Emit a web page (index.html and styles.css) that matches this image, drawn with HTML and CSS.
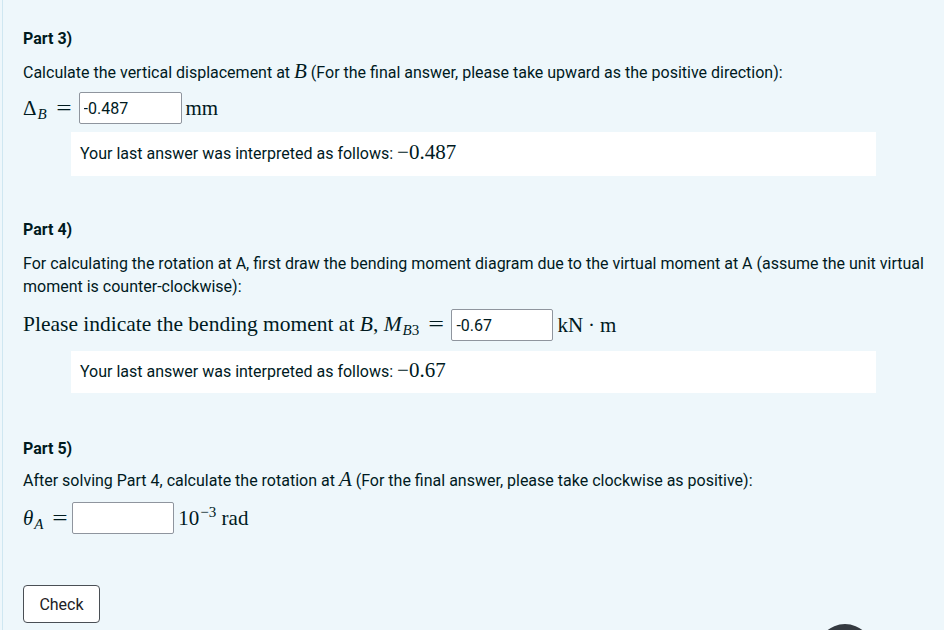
FILE: index.html
```html
<!DOCTYPE html>
<html lang="en">
<head>
<meta charset="utf-8">
<title>Question parts</title>
<link rel="stylesheet" href="styles.css">
</head>
<body>
<div class="formulation">
  <section class="part part-3">
    <p class="part-title">Part 3)</p>
    <p class="text">Calculate the vertical displacement at <span class="mi">B</span> (For the final answer, please take upward as the positive direction):</p>
    <div class="answer-row">
      <span class="math lhs">Δ<span class="sub mi">B</span><span class="eq">=</span></span>
      <input class="answer w103" type="text" value="-0.487">
      <span class="math unit">mm</span>
    </div>
    <div class="validation">Your last answer was interpreted as follows: <span class="math">−0.487</span></div>
  </section>

  <section class="part part-4">
    <p class="part-title">Part 4)</p>
    <p class="text">For calculating the rotation at A, first draw the bending moment diagram due to the virtual moment at A (assume the unit virtual moment is counter-clockwise):</p>
    <div class="answer-row">
      <span class="math lhs wide">Please indicate the bending moment at <span class="mi">B</span>, <span class="mi">M</span><span class="sub"><span class="mi">B</span>3</span><span class="eq">=</span></span>
      <input class="answer w102" type="text" value="-0.67">
      <span class="math unit">kN<span class="cdot">·</span>m</span>
    </div>
    <div class="validation">Your last answer was interpreted as follows: <span class="math">−0.67</span></div>
  </section>

  <section class="part part-5">
    <p class="part-title">Part 5)</p>
    <p class="text">After solving Part 4, calculate the rotation at <span class="mi">A</span> (For the final answer, please take clockwise as positive):</p>
    <div class="answer-row">
      <span class="math lhs"><span class="mi">θ</span><span class="sub mi">A</span><span class="eq eq-tight">=</span></span>
      <input class="answer w102" type="text" value="">
      <span class="math unit">10<span class="sup">−3</span> rad</span>
    </div>
  </section>

  <div class="actions">
    <button class="check-btn" type="button">Check</button>
  </div>
</div>
<div class="footer-fab" aria-hidden="true"></div>
</body>
</html>
```

FILE: styles.css
```css
* { box-sizing: border-box; }

html, body {
  margin: 0;
  padding: 0;
  background: #eef7fb;
}

body {
  width: 944px;
  height: 630px;
  overflow: hidden;
  position: relative;
  font-family: Roboto, "Liberation Sans", sans-serif;
  font-size: 16px;
  color: #001a1e;
}

.formulation {
  margin-left: 2px;
  border-left: 1px solid #cfe7f1;
  padding: 27px 12px 0 20px;
  height: 630px;
}

p { margin: 0; line-height: 23px; }

.part-title { font-weight: 700; }

.text { margin-top: 11px; }

.part-4 { margin-top: 42px; }
.part-5 { margin-top: 44px; }
.part-5 .text { margin-top: 9px; }

.math {
  font-family: "Liberation Serif", "DejaVu Serif", serif;
  font-size: 21px;
  line-height: 1;
}
.math.wide { font-size: 21.5px; }

.mi {
  font-style: italic;
  font-family: "Liberation Serif", "DejaVu Serif", serif;
  font-size: 21px;
}
.wide .mi { font-size: 21.5px; }
.text .mi { line-height: 0; }

.sub {
  font-size: 15px;
  position: relative;
  top: 4px;
  margin-left: 1px;
}
.sub .mi, .wide .sub .mi { font-size: 15px; }
.wide .sub { font-size: 15px; }

.sup {
  font-size: 15px;
  position: relative;
  top: -8px;
  margin-left: 1px;
}

.eq {
  display: inline-block;
  transform: scaleX(1.3);
  margin: 0 9px 0 11px;
}
.eq-tight { margin: 0 7px 0 10px; }

.answer-row {
  display: flex;
  align-items: center;
  height: 32px;
  margin-top: 8px;
}
.part-4 .answer-row { margin-top: 11px; }
.part-5 .answer-row { margin-top: 10px; }

.answer {
  height: 32px;
  border: 1px solid #8f959e;
  border-radius: 2px;
  background: #fff;
  font-family: Roboto, "Liberation Sans", sans-serif;
  font-size: 16px;
  color: #001a1e;
  padding: 0 4px;
  margin: 0;
  outline: none;
}
.w103 { width: 103px; }
.w102 { width: 102px; }

.unit { margin-left: 4px; }
.cdot { margin: 0 5px; }

.validation {
  margin: 8px 56px 0 48px;
  background: #fff;
  padding: 10px 9px;
  line-height: 24px;
  height: 44px;
}
.part-4 .validation { height: 42px; padding-top: 9px; margin-top: 10px; }

.actions { margin-top: 51px; }

.check-btn {
  width: 77px;
  height: 38px;
  background: #fff;
  border: 1px solid #4a4f55;
  border-radius: 4px;
  font-family: Roboto, "Liberation Sans", sans-serif;
  font-size: 16px;
  color: #1d2125;
  padding: 0;
}

.footer-fab {
  position: absolute;
  left: 817px;
  top: 624px;
  width: 56px;
  height: 56px;
  border-radius: 50%;
  background: #343a40;
}
```
